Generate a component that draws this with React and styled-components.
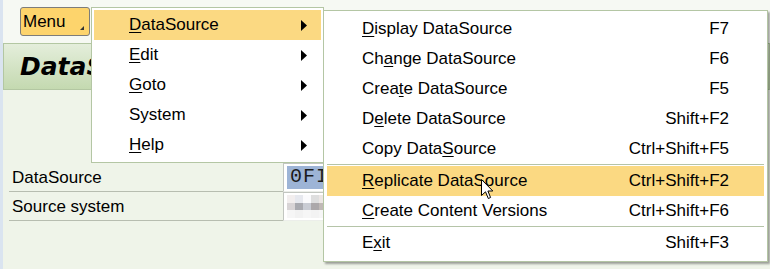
import React from "react";
import styled, { createGlobalStyle } from "styled-components";

const GlobalStyle = createGlobalStyle`
  html, body { margin: 0; padding: 0; }
  body {
    background: #eef3e7;
    font-family: "Liberation Sans", Arial, sans-serif;
    color: #000;
  }
`;

const Screen = styled.div`
  position: relative;
  width: 770px;
  height: 269px;
  overflow: hidden;
  display: flex;
  background: #eff4e9;
`;

const LeftStrip = styled.div`
  width: 3px;
  flex: none;
  background: #dae4f0;
`;

const Main = styled.div`
  flex: 1;
  display: flex;
  flex-direction: column;
`;

const Toolbar = styled.div`
  height: 43px;
  box-sizing: border-box;
  padding: 7px 0 0 17px;
  background: #f6f9f3;
  display: flex;
  align-items: flex-start;
`;

const MenuButton = styled.div`
  position: relative;
  width: 70px;
  height: 29px;
  box-sizing: border-box;
  border: 1px solid #7d7d7a;
  border-radius: 3px;
  background: #fdd46c;
  font-size: 17px;
  line-height: 27px;
  padding-left: 2px;
  &::after {
    content: "";
    position: absolute;
    right: 5px;
    bottom: 5px;
    width: 0;
    height: 0;
    border-left: 4px solid transparent;
    border-bottom: 4px solid #333;
  }
`;

const TitleBar = styled.div`
  height: 47px;
  box-sizing: border-box;
  border: 1px solid #b3c7a2;
  background: linear-gradient(#e4eedb, #c4d9b0);
  padding-left: 16px;
  display: flex;
  align-items: center;
  font-family: "DejaVu Sans", Verdana, sans-serif;
  font-size: 25px;
  font-weight: bold;
  font-style: italic;
  white-space: nowrap;
`;

const Form = styled.div`
  padding: 73px 0 0 6px;
  display: flex;
  flex-direction: column;
`;

const FormRow = styled.div`
  display: flex;
  height: 29px;
  align-items: stretch;
`;

const Label = styled.div`
  width: 274px;
  box-sizing: border-box;
  border-bottom: 1px solid #b7bdb0;
  padding-left: 3px;
  font-size: 17px;
  line-height: 30px;
`;

const Field = styled.div`
  width: 120px;
  box-sizing: border-box;
  border: 1px solid #c2c6c0;
  border-bottom-color: #eceeea;
  background: #fff;
  padding: 2px 3px;
  display: flex;
  align-items: stretch;
`;

const Selected = styled.span`
  background: #9db4d6;
  font-family: "Liberation Mono", "Courier New", monospace;
  font-size: 20px;
  line-height: 22px;
  letter-spacing: 1px;
  padding-left: 3px;
  color: #1b1b1b;
`;

const Pixel = styled.span`
  width: 8px;
  background: ${(p) => p.c};
`;

const PixelCol = styled.span`
  display: flex;
  flex-direction: column;
`;

const Cell = styled.span`
  width: 8px;
  height: 8px;
  background: ${(p) => p.c};
`;

const Popup = styled.div`
  position: absolute;
  left: ${(p) => p.x}px;
  top: ${(p) => p.y}px;
  width: ${(p) => p.w}px;
  box-sizing: border-box;
  background: #fff;
  border: 1px solid #b4c6a4;
  padding: ${(p) => p.pad};
  box-shadow: ${(p) => (p.shadow ? "2px 2px 2px rgba(0,0,0,0.35)" : "none")};
  display: flex;
  flex-direction: column;
`;

const Item = styled.div`
  height: 30px;
  display: flex;
  align-items: center;
  justify-content: space-between;
  padding: 0 ${(p) => p.pr}px 0 35px;
  font-size: 17px;
  white-space: nowrap;
  background: ${(p) => (p.active ? "#fbd982" : "transparent")};
  u { text-decoration: underline; text-underline-offset: 2px; }
`;

const Separator = styled.div`
  height: 1px;
  background: #b5c4a8;
  margin-bottom: 1px;
`;

const Cursor = styled.svg`
  position: absolute;
  left: 481px;
  top: 179px;
`;

const Arrow = () => (
  <svg width="6" height="11" viewBox="0 0 6 11">
    <polygon points="0,0 6,5.5 0,11" fill="#000" />
  </svg>
);

const mainItems = [
  ["D", "ataSource", true],
  ["E", "dit", false],
  ["G", "oto", false],
  [null, "System", false],
  ["H", "elp", false],
];

export default function App() {
  return (
    <>
      <GlobalStyle />
      <Screen>
        <LeftStrip />
        <Main>
          <Toolbar>
            <MenuButton>Menu</MenuButton>
          </Toolbar>
          <TitleBar>DataSource Tree</TitleBar>
          <Form>
            <FormRow>
              <Label>DataSource</Label>
              <Field>
                <Selected>0FI_GL_4</Selected>
              </Field>
            </FormRow>
            <FormRow>
              <Label>Source system</Label>
              <Field>
                <PixelCol>
                  <Cell c="#f2eeee" />
                  <Cell c="#d8d4d6" />
                  <Cell c="#f6f6f6" />
                </PixelCol>
                <PixelCol>
                  <Cell c="#e6e8ee" />
                  <Cell c="#a9aab0" />
                  <Cell c="#f2f2f2" />
                </PixelCol>
                <PixelCol>
                  <Cell c="#fafafc" />
                  <Cell c="#c9ccd4" />
                  <Cell c="#f6f6f6" />
                </PixelCol>
                <PixelCol>
                  <Cell c="#dedede" />
                  <Cell c="#aca8aa" />
                  <Cell c="#f3f3f3" />
                </PixelCol>
                <PixelCol>
                  <Cell c="#ece6e4" />
                  <Cell c="#c0b9b6" />
                  <Cell c="#f6f6f6" />
                </PixelCol>
                <Pixel c="#fff" />
              </Field>
            </FormRow>
          </Form>
        </Main>

        <Popup x={91} y={7} w={233} pad="2px">
          {mainItems.map(([u, rest, active]) => (
            <Item key={rest} pr={14} active={active}>
              <span>
                {u && <u>{u}</u>}
                {rest}
              </span>
              <Arrow />
            </Item>
          ))}
        </Popup>

        <Popup x={323} y={10} w={445} pad="3px" shadow>
          <Item pr={35}>
            <span><u>D</u>isplay DataSource</span>
            <span>F7</span>
          </Item>
          <Item pr={35}>
            <span>Ch<u>a</u>nge DataSource</span>
            <span>F6</span>
          </Item>
          <Item pr={35}>
            <span>Crea<u>t</u>e DataSource</span>
            <span>F5</span>
          </Item>
          <Item pr={35}>
            <span>D<u>e</u>lete DataSource</span>
            <span>Shift+F2</span>
          </Item>
          <Item pr={35}>
            <span>Copy Data<u>S</u>ource</span>
            <span>Ctrl+Shift+F5</span>
          </Item>
          <Separator />
          <Item pr={35} active>
            <span><u>R</u>eplicate DataSource</span>
            <span>Ctrl+Shift+F2</span>
          </Item>
          <Item pr={35}>
            <span><u>C</u>reate Content Versions</span>
            <span>Ctrl+Shift+F6</span>
          </Item>
          <Separator />
          <Item pr={35}>
            <span>E<u>x</u>it</span>
            <span>Shift+F3</span>
          </Item>
        </Popup>

        <Cursor width="14" height="22" viewBox="0 0 14 22">
          <path
            d="M0.5 0.5 L0.5 16.5 L4.5 12.8 L7.3 19.5 L9.6 18.5 L6.9 12 L11.8 12 Z"
            fill="#fff"
            stroke="#000"
            strokeWidth="1"
            strokeLinejoin="miter"
          />
        </Cursor>
      </Screen>
    </>
  );
}
